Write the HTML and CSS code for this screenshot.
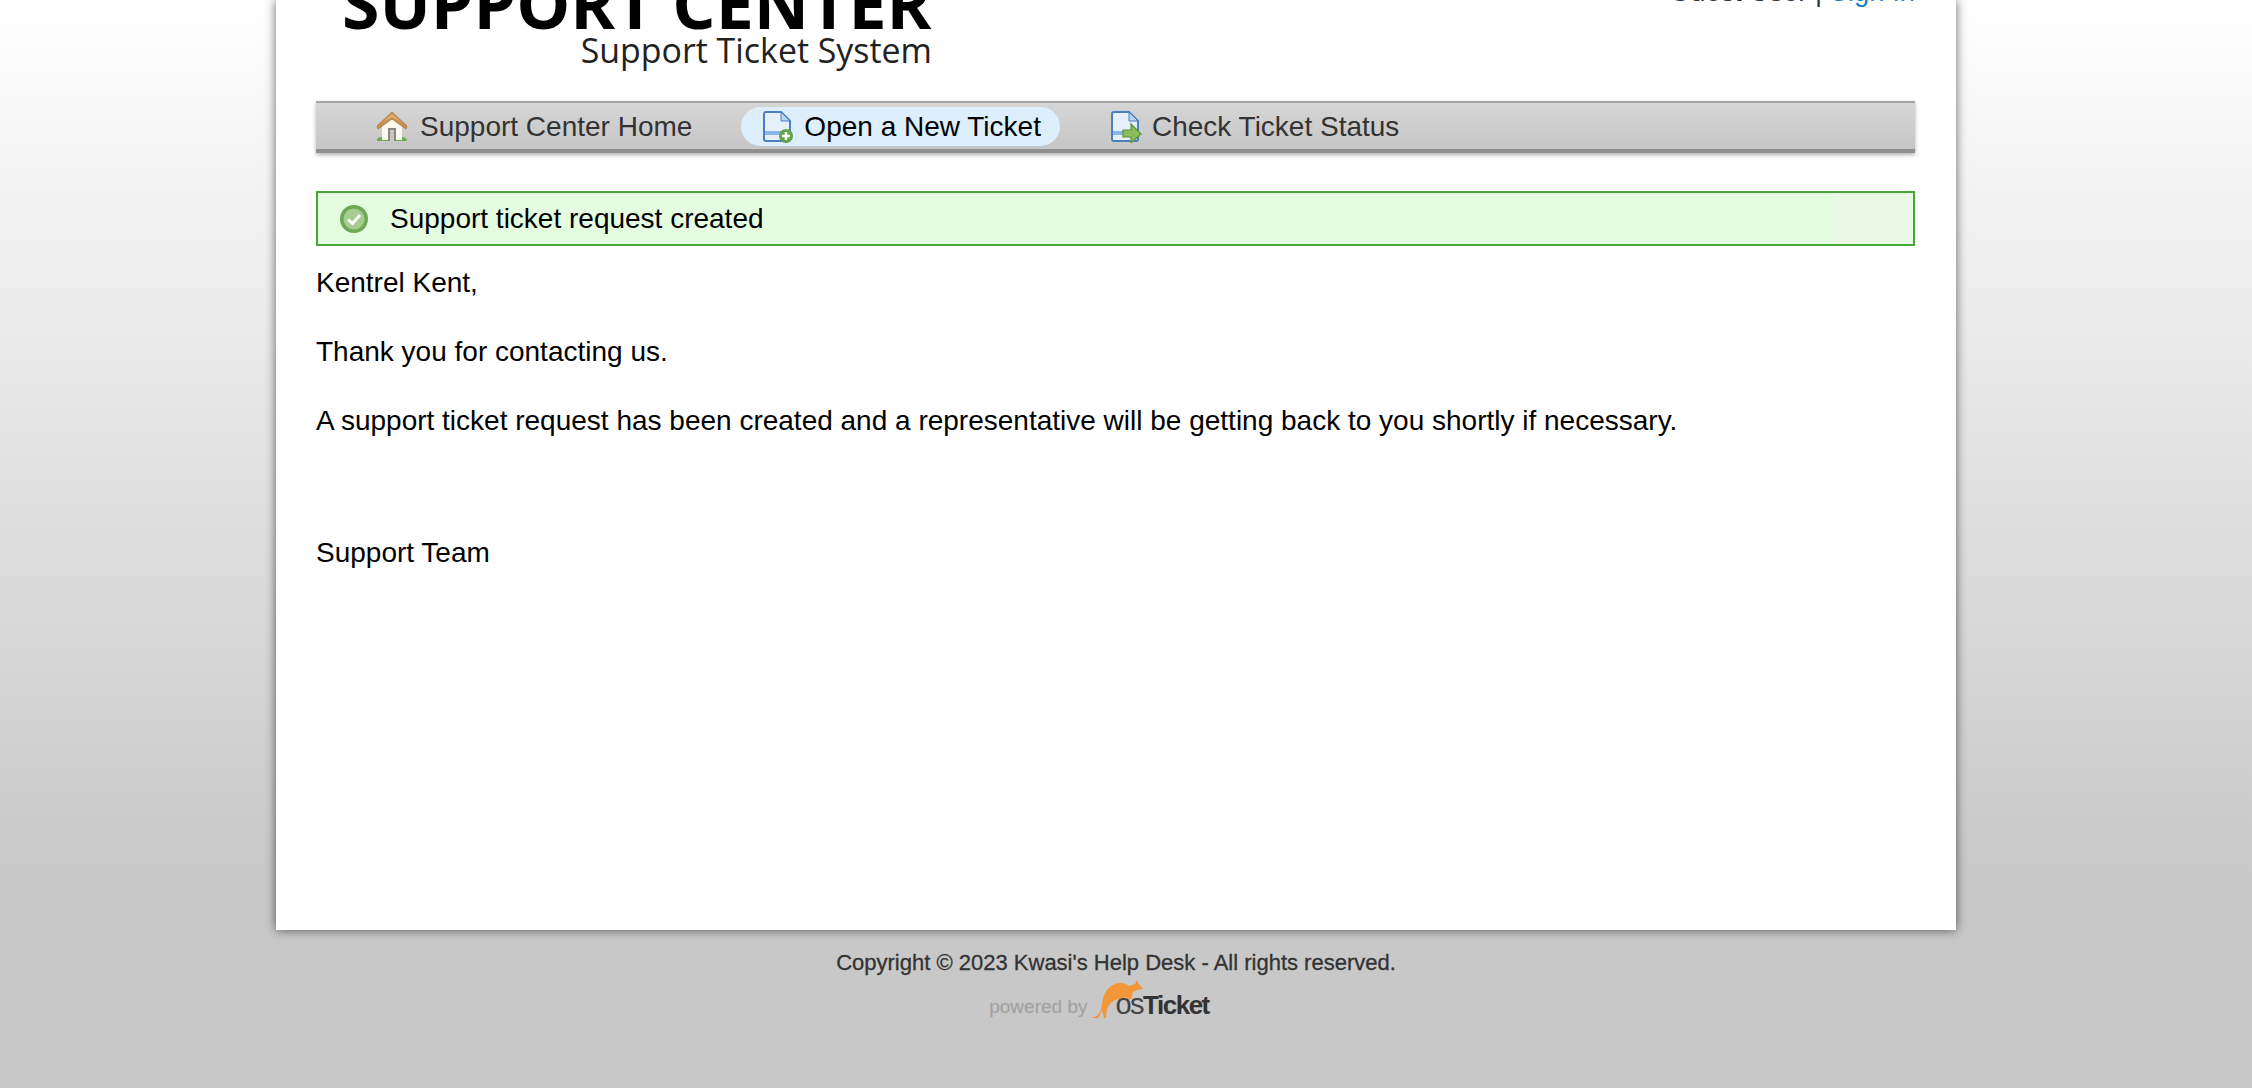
FILE: index.html
```html
<!DOCTYPE html>
<html lang="en">
<head>
    <meta charset="UTF-8">
    <title>Support Center</title>
    <link rel="stylesheet" href="styles.css">
</head>
<body>

    <div id="container">
        <div id="header">
            <div class="logo">
                <div class="logo-title">SUPPORT CENTER</div>
                <div class="logo-sub">Support Ticket System</div>
            </div>
            <p class="user-info">Guest User | <a href="#">Sign In</a></p>
        </div>

        <ul id="nav">
            <li class="home">
                <a href="#">
                    <svg class="nav-icon" viewBox="0 0 32 32">
                        <path d="M1 30q0-4 4-4t4 1h14q1-1 4-1t4 4z" fill="#69ad4a"/>
                        <path d="M6 14L16 6l10 8v15H6z" fill="#fbf8f2"/>
                        <rect x="12" y="17" width="8" height="13" fill="#85857e"/>
                        <rect x="14" y="19" width="4" height="11" fill="#c8c8c0"/>
                        <path d="M16 1L31 15l-1 3-14-10L2 18l-1-3z" fill="#c9914f" stroke="#a8713a" stroke-width="0.800"/>
                        <path d="M16 3l9 8-9-5-9 5z" fill="#e2b37c"/>
                    </svg>
                    Support Center Home
                </a>
            </li>
            <li class="active">
                <a href="#">
                    <svg class="nav-icon" viewBox="0 0 32 32">
                        <path d="M2 3q0-2 2-2h15l9 9v18q0 2-2 2H4q-2 0-2-2z" fill="#e6effa" stroke="#4a7fc4" stroke-width="2"/>
                        <path d="M19 1v9h9z" fill="#bcd4ee" stroke="#4a7fc4" stroke-width="1"/>
                        <rect x="3" y="20" width="16" height="4" fill="#86b6ea"/>
                        <circle cx="24" cy="25" r="7" fill="#5fa548"/>
                        <path d="M24 21v8M20 25h8" stroke="#fff" stroke-width="2.500"/>
                    </svg>
                    Open a New Ticket
                </a>
            </li>
            <li>
                <a href="#">
                    <svg class="nav-icon" viewBox="0 0 32 32">
                        <path d="M2 3q0-2 2-2h15l9 9v18q0 2-2 2H4q-2 0-2-2z" fill="#e6effa" stroke="#4a7fc4" stroke-width="2"/>
                        <path d="M19 1v9h9z" fill="#bcd4ee" stroke="#4a7fc4" stroke-width="1"/>
                        <rect x="3" y="20" width="11" height="4" fill="#86b6ea"/>
                        <path d="M13 19h8v-6l10 10-10 9v-6h-8z" fill="#8cbc5c" stroke="#5b9437" stroke-width="1.200"/>
                    </svg>
                    Check Ticket Status
                </a>
            </li>
        </ul>

        <div id="content">
            <div class="msg-success">
                <svg class="msg-icon" viewBox="0 0 28 28">
                    <circle cx="14" cy="14" r="14" fill="#6da954"/>
                    <circle cx="14" cy="14" r="10.500" fill="#a5cc91"/>
                    <path d="M8 14.500l4.500 4L20 10" fill="none" stroke="#fff" stroke-width="3"/>
                </svg>
                Support ticket request created
            </div>
            <p class="msg-line">Kentrel Kent,</p>
            <p class="msg-line">Thank you for contacting us.</p>
            <p class="msg-line">A support ticket request has been created and a representative will be getting back to you shortly if necessary.</p>
            <p class="msg-line msg-sign">Support Team</p>
        </div>
    </div>

    <div id="footer">
        <p class="copyright">Copyright © 2023 Kwasi's Help Desk - All rights reserved.</p>
        <div class="powered">
            <span class="powered-by">powered by</span>
            <svg class="roo" viewBox="0 0 52 40">
                <path d="M0 38L6 36Q10 33 11 24Q13 8 24 4Q32 1 38 6L44 4L46 0L47 3L52 9L46 10L42 12L40 19L36 20L35 17L28 19Q22 20 19 24Q15 28 15 38L13 38L11 30Q9 36 7 38Z" fill="#f39637"/>
            </svg>
            <span class="os-name"><span class="os-light">os</span>Ticket</span>
        </div>
    </div>

</body>
</html>
```

FILE: styles.css
```css
html, body {
    height: 100%;
    margin: 0;
    overflow: hidden;
}

body {
    font-family: "Liberation Sans", Arial, sans-serif;
    background: linear-gradient(to bottom, #ffffff 0, #c8c8c8 880px, #c8c8c8 100%);
    color: #000;
    padding-right: 20px;
    box-sizing: border-box;
}

#container {
    width: 1680px;
    height: 930px;
    margin: 0 auto;
    padding: 0 41px 0 40px;
    box-sizing: border-box;
    background: #fff;
    box-shadow: 0 0 10px rgba(0, 0, 0, 0.6);
}

#header {
    height: 101px;
    display: flex;
    justify-content: space-between;
}

.logo {
    width: 590px;
    margin-left: 26px;
    font-family: "Open Sans", sans-serif;
    color: #000;
}

.logo-title {
    font-size: 68px;
    font-weight: 700;
    line-height: 66px;
    margin-top: -30px;
    white-space: nowrap;
}

.logo-sub {
    font-size: 33.9px;
    line-height: 36px;
    margin-top: -4px;
    text-align: right;
    color: #222;
}

.user-info {
    margin: -22px 0 0;
    font-size: 27.400px;
    line-height: 28px;
    color: #333;
}

.user-info a {
    color: #1b7fc4;
    text-decoration: none;
}

#nav {
    list-style: none;
    margin: 0;
    padding: 4px 0 0 38px;
    height: 52px;
    box-sizing: border-box;
    display: flex;
    gap: 29px;
    background: linear-gradient(to bottom, #d6d6d6, #c6c6c6);
    border-top: 2px solid #a3a3a3;
    border-bottom: 4px solid #8f8f8f;
    box-shadow: 0 2px 4px rgba(0, 0, 0, 0.3);
}

#nav li {
    height: 39px;
}

#nav a {
    display: flex;
    align-items: center;
    height: 39px;
    padding: 0 19px 0 21px;
    border-radius: 20px;
    font-size: 28px;
    color: #333;
    text-decoration: none;
}

#nav li.home a {
    padding: 0 20px 0 22px;
}

#nav li.active a {
    background: #ddeefc;
    color: #000;
}

.nav-icon {
    width: 32px;
    height: 32px;
    margin-right: 10px;
    flex: none;
}

.home .nav-icon {
    margin-right: 12px;
}

#content {
    padding-top: 38px;
}

.msg-success {
    display: flex;
    align-items: center;
    height: 55px;
    box-sizing: border-box;
    padding-left: 22px;
    border: 2px solid #45a835;
    background: linear-gradient(to right, #e4fce0 95%, #e9f9e6 95%);
    font-size: 28px;
}

.msg-icon {
    width: 28px;
    height: 28px;
    margin-right: 22px;
}

.msg-line {
    margin: 36px 0 0;
    font-size: 28px;
    line-height: 33px;
}

.msg-success + .msg-line {
    margin-top: 20px;
}

.msg-sign {
    margin-top: 99px;
}

#footer {
    text-align: center;
    color: #333;
}

.copyright {
    margin: 20px 0 0;
    font-size: 22px;
    line-height: 26px;
    -webkit-text-stroke: 0.3px #333;
}

.powered {
    display: flex;
    justify-content: center;
    align-items: flex-end;
    height: 44px;
    padding-right: 34px;
}

.powered-by {
    font-size: 19px;
    line-height: 26px;
    color: #a2a2a2;
    margin-right: 4px;
    -webkit-text-stroke: 0.3px #a8a8a8;
}

.roo {
    width: 52px;
    height: 40px;
}

.os-name {
    font-size: 26px;
    font-weight: 700;
    line-height: 30px;
    letter-spacing: -1.500px;
    color: #333;
    margin-left: -28px;
}

.os-light {
    font-size: 29px;
    font-weight: 400;
    color: #444;
}
```
